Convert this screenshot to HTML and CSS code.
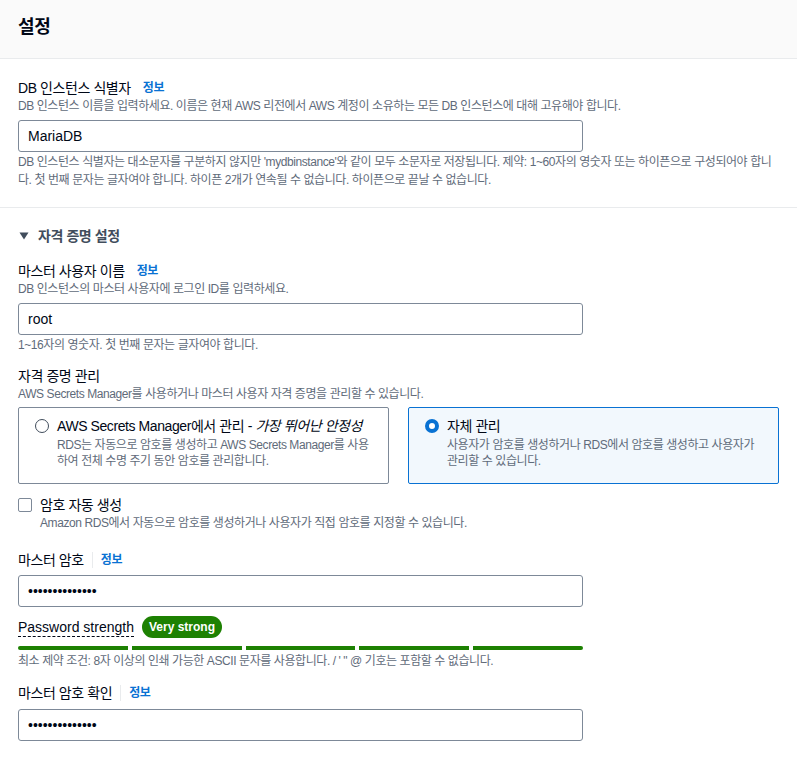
FILE: index.html
```html
<!DOCTYPE html>
<html lang="ko">
<head>
<meta charset="utf-8">
<title>설정</title>
<link rel="stylesheet" href="styles.css">
</head>
<body>
<div class="page">
  <header class="header"><h2 class="title">설정</h2></header>

  <section class="section first">
    <div class="label-row"><span class="label">DB 인스턴스 식별자</span><a class="info">정보</a></div>
    <div class="desc">DB 인스턴스 이름을 입력하세요. 이름은 현재 AWS 리전에서 AWS 계정이 소유하는 모든 DB 인스턴스에 대해 고유해야 합니다.</div>
    <div class="input">MariaDB</div>
    <div class="helper">DB 인스턴스 식별자는 대소문자를 구분하지 않지만 'mydbinstance'와 같이 모두 소문자로 저장됩니다. 제약: 1~60자의 영숫자 또는 하이픈으로 구성되어야 합니다. 첫 번째 문자는 글자여야 합니다. 하이픈 2개가 연속될 수 없습니다. 하이픈으로 끝날 수 없습니다.</div>
  </section>

  <section class="section second">
    <div class="expander"><svg class="caret" width="10" height="8" viewBox="0 0 10 8"><polygon points="0.5,0.5 9.5,0.5 5,7.5" fill="#414d5c"/></svg><span>자격 증명 설정</span></div>

    <div class="field f-user">
      <div class="label-row"><span class="label">마스터 사용자 이름</span><a class="info">정보</a></div>
      <div class="desc">DB 인스턴스의 마스터 사용자에 로그인 ID를 입력하세요.</div>
      <div class="input">root</div>
      <div class="helper">1~16자의 영숫자. 첫 번째 문자는 글자여야 합니다.</div>
    </div>

    <div class="field f-cred">
      <div class="label-row"><span class="label">자격 증명 관리</span></div>
      <div class="desc">AWS Secrets Manager를 사용하거나 마스터 사용자 자격 증명을 관리할 수 있습니다.</div>
      <div class="tiles">
        <div class="tile">
          <span class="radio"></span>
          <div class="tile-body">
            <div class="tile-title">AWS Secrets Manager에서 관리 - <em>가장 뛰어난 안정성</em></div>
            <div class="tile-desc">RDS는 자동으로 암호를 생성하고 AWS Secrets Manager를 사용하여 전체 수명 주기 동안 암호를 관리합니다.</div>
          </div>
        </div>
        <div class="tile selected">
          <span class="radio checked"></span>
          <div class="tile-body">
            <div class="tile-title">자체 관리</div>
            <div class="tile-desc">사용자가 암호를 생성하거나 RDS에서 암호를 생성하고 사용자가 관리할 수 있습니다.</div>
          </div>
        </div>
      </div>
    </div>

    <div class="checkbox-row">
      <span class="checkbox"></span>
      <div>
        <div class="cb-label">암호 자동 생성</div>
        <div class="desc">Amazon RDS에서 자동으로 암호를 생성하거나 사용자가 직접 암호를 지정할 수 있습니다.</div>
      </div>
    </div>

    <div class="field f-pass">
      <div class="label-row"><span class="label">마스터 암호</span><span class="sep"></span><a class="info">정보</a></div>
      <div class="input dots">••••••••••••••</div>
      <div class="strength-row"><span class="strength-label">Password strength</span><span class="badge">Very strong</span></div>
      <div class="bars"><span></span><span></span><span></span><span></span><span></span></div>
      <div class="helper">최소 제약 조건: 8자 이상의 인쇄 가능한 ASCII 문자를 사용합니다. / ' " @ 기호는 포함할 수 없습니다.</div>
    </div>

    <div class="field f-confirm">
      <div class="label-row"><span class="label">마스터 암호 확인</span><span class="sep"></span><a class="info">정보</a></div>
      <div class="input dots">••••••••••••••</div>
    </div>
  </section>
</div>
</body>
</html>
```
FILE: styles.css
```css
* { box-sizing: border-box; }
body {
  margin: 0;
  background: #ffffff;
  color: #000716;
  font-family: "Liberation Sans", "Noto Sans CJK KR", sans-serif;
  font-size: 14px;
  line-height: 20px;
  letter-spacing: -0.03em;
}
.page { width: 797px; }
.header {
  height: 59px;
  background: #fafafa;
  border-bottom: 1px solid #e9ebed;
  padding: 16px 18px 0;
}
.title {
  margin: 0;
  font-size: 18px;
  line-height: 22px;
  font-weight: 700;
}
.section { padding: 0 18px; }
.section.first {
  padding-top: 19px;
  padding-bottom: 18px;
  border-bottom: 1px solid #e9ebed;
}
.section.second { padding-top: 18px; }
.label-row {
  display: flex;
  align-items: center;
  height: 20px;
}
.label { font-size: 14px; }
.info {
  color: #0972d3;
  font-size: 12px;
  font-weight: 700;
  margin-left: 12px;
}
.sep {
  width: 1px;
  height: 16px;
  background: #e9ebed;
  margin-left: 8px;
}
.sep + .info { margin-left: 8px; }
.desc {
  font-size: 12px;
  line-height: 16px;
  color: #5f6b7a;
}
.input {
  width: 565px;
  height: 32px;
  margin-top: 6px;
  border: 1px solid #7d8998;
  border-radius: 3px;
  padding: 0 9px;
  display: flex;
  align-items: center;
  font-size: 14px;
  letter-spacing: 0;
}
.helper {
  font-size: 12px;
  line-height: 18px;
  color: #5f6b7a;
  margin-top: 1px;
}
.expander {
  display: flex;
  align-items: center;
  font-weight: 700;
  color: #414d5c;
  height: 20px;
}
.caret { margin: 0 9px 0 1px; }
.f-user { margin-top: 15px; }
.f-cred { margin-top: 12px; }
.tiles {
  display: grid;
  grid-template-columns: 371px 371px;
  gap: 19px;
  margin-top: 5px;
}
.tile {
  display: flex;
  border: 1px solid #7d8998;
  border-radius: 2px;
  padding: 8px 16px 14px 15px;
  min-height: 77px;
}
.tile.selected {
  border-color: #0972d3;
  background: #f2f8fd;
}
.radio {
  flex: none;
  width: 14px;
  height: 14px;
  border: 1.5px solid #414d5c;
  border-radius: 50%;
  margin: 3px 8px 0 1px;
  background: #fff;
}
.radio.checked {
  border: 4px solid #0972d3;
}
.tile-title { font-size: 14px; line-height: 20px; }
.tile-title em { font-style: italic; }
.tile-desc {
  font-size: 12px;
  line-height: 16px;
  color: #5f6b7a;
  margin-top: 1px;
}
.checkbox-row {
  display: flex;
  margin-top: 11px;
}
.checkbox {
  flex: none;
  width: 14px;
  height: 14px;
  border: 1.5px solid #7d8998;
  border-radius: 2px;
  margin: 3px 8px 0 0;
}
.cb-label { font-size: 14px; line-height: 20px; }
.f-pass { margin-top: 19px; }
.f-pass .input { margin-top: 5px; }
.strength-row {
  display: flex;
  align-items: center;
  margin-top: 9px;
  height: 22px;
  letter-spacing: 0;
}
.strength-label {
  font-size: 14px;
  line-height: 18px;
  border-bottom: 1px dashed #000716;
}
.badge {
  margin-left: 8px;
  background: #1d8102;
  color: #fff;
  font-size: 12px;
  font-weight: 700;
  line-height: 22px;
  height: 22px;
  padding: 0 7px;
  border-radius: 11px;
}
.bars {
  display: flex;
  gap: 4px;
  width: 565px;
  margin-top: 8px;
}
.bars span {
  flex: 1;
  height: 4px;
  background: #1d8102;
}
.bars span:first-child { border-radius: 2px 0 0 2px; }
.bars span:last-child { border-radius: 0 2px 2px 0; }
.f-pass .helper { margin-top: 3px; line-height: 16px; }
.f-confirm { margin-top: 14px; }
.f-confirm .input { margin-top: 6px; }
```
